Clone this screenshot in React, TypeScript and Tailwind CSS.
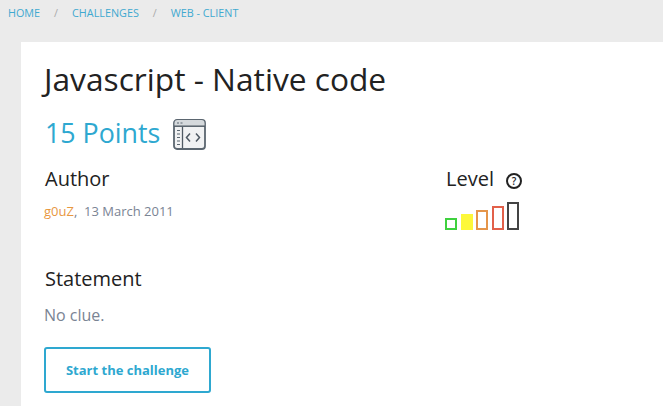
const openSans = "font-['Open_Sans',sans-serif]"

function ChallengeIcon() {
  return (
    <svg width="33" height="31" viewBox="0 0 33 31" fill="none" className="ml-[13px] mt-[2px]">
      <rect x="1" y="1" width="31" height="29" rx="3" fill="#f1f2f3" stroke="#5b6670" strokeWidth="1.8" />
      <path d="M1.5 4a3 3 0 0 1 3-3h24a3 3 0 0 1 3 3v3.5h-30z" fill="#d5d9dc" />
      <path d="M1 7.2h31" stroke="#4f5963" strokeWidth="1.4" />
      <path d="M4 4h2M7.5 4h2" stroke="#5b6670" strokeWidth="1" />
      <path d="M9.5 8v21" stroke="#4f5963" strokeWidth="1.3" />
      <path d="M4 11.5h3M4 15h3M4 18.5h3M4 22h3M4 25.5h3" stroke="#5b6670" strokeWidth="1.2" />
      <path d="M17 14.5l-3.5 4 3.5 4M23 14.5l3.5 4-3.5 4" stroke="#4f5963" strokeWidth="1.5" />
    </svg>
  )
}

function LevelBars() {
  return (
    <div className="mt-[10px] flex items-end gap-[3.5px]">
      <div className="h-[12px] w-[12px] border-2 border-[#3fd13f]" />
      <div className="h-[16px] w-[12px] bg-[#fdf83a]" />
      <div className="h-[20px] w-[12px] border-2 border-[#e5954a]" />
      <div className="h-[24px] w-[12px] border-2 border-[#e2604a]" />
      <div className="h-[28px] w-[12px] border-2 border-[#444444]" />
    </div>
  )
}

export default function App() {
  return (
    <div className={`h-[406px] w-[663px] overflow-hidden bg-[#ebebeb] ${openSans}`}>
      <nav className="flex h-[42px] items-start pl-[8px] pt-[5px] text-[10.8px] leading-[16px] text-[#3fa9d0]">
        <a>HOME</a>
        <span className="ml-[14px] text-[#aaaaaa]">/</span>
        <a className="ml-[14px]">CHALLENGES</a>
        <span className="ml-[14px] text-[#aaaaaa]">/</span>
        <a className="ml-[14px]">WEB - CLIENT</a>
      </nav>
      <main className="ml-[21px] h-[364px] bg-white pl-[23px] pt-[15px]">
        <h1 className="text-[31.7px] leading-[44px] text-[#222222]">Javascript - Native code</h1>
        <div className="mt-[14px] flex h-[36px] items-center">
          <span className="ml-[1px] text-[26.8px] leading-[36px] text-[#2ea8d0]">15 Points</span>
          <ChallengeIcon />
        </div>
        <div className="mt-[15px] flex">
          <div className="w-[401px]">
            <h2 className="ml-[1px] text-[20px] leading-[26px] text-[#222222]">Author</h2>
            <p className="mt-[10px] text-[13px] leading-[18px] text-[#7a8494]">
              <span className="text-[#e8973f]">g0uZ</span>,&nbsp; 13 March 2011
            </p>
          </div>
          <div>
            <h2 className="ml-[1px] flex items-center text-[20px] leading-[26px] text-[#222222]">
              Level
              <span className="ml-[12px] mt-[3px] flex h-[16px] w-[16px] items-center justify-center rounded-full border-2 border-[#222222] text-[10px] font-semibold leading-none">?</span>
            </h2>
            <LevelBars />
          </div>
        </div>
        <h2 className="ml-[1px] mt-[36px] text-[20px] leading-[26px] text-[#222222]">Statement</h2>
        <p className="mt-[12px] text-[16px] leading-[22px] text-[#7a8494]">No clue.</p>
        <button className="mt-[21px] h-[46px] w-[167px] rounded-[3px] border-2 border-[#2ea8d0] pt-[1px] text-[13px] font-bold text-[#2ea8d0]">
          Start the challenge
        </button>
      </main>
    </div>
  )
}
